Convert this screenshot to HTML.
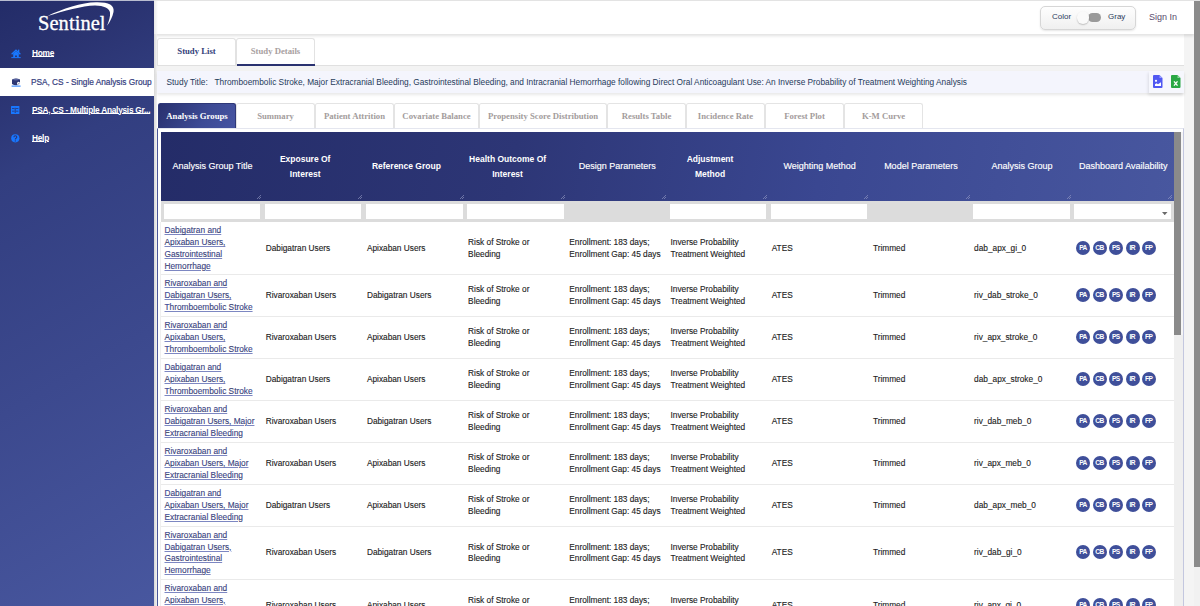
<!DOCTYPE html><html><head><meta charset="utf-8"><style>
*{margin:0;padding:0;box-sizing:border-box}
html,body{width:1200px;height:606px;overflow:hidden;background:#f4f4f4;font-family:"Liberation Sans",sans-serif}
.abs{position:absolute}
#topline{left:0;top:0;width:1200px;height:1px;background:#e4e4e4}
#topline2{left:0;top:0;width:154px;height:1px;background:#b9bdd0}
#side{left:0;top:1px;width:154px;height:605px;background:linear-gradient(150deg,#232c68 0%,#2a3371 12%,#323e80 26%,#3c498e 60%,#48579f 100%)}
#sideshadow{left:154px;top:34px;width:3px;height:572px;background:linear-gradient(90deg,#d8d8d8,#f2f2f2)}
.logo{left:38px;top:12px;-webkit-text-stroke:0.3px #fff;font-family:"Liberation Serif",serif;font-size:20.5px;line-height:22px;color:#fff;letter-spacing:0.05px}
.mi{left:0;width:154px;height:28px;font-size:8.3px;font-weight:bold;color:#fff;text-decoration:underline;text-underline-offset:0px;line-height:28px;padding-left:32px;white-space:nowrap;letter-spacing:-0.25px}
.mi.act{background:#fff;color:#36407e;font-weight:normal;text-decoration:none;letter-spacing:-0.02px;padding-left:31px;-webkit-text-stroke:0.2px #36407e}
.ico{position:absolute;left:11px;top:10px}
#header{left:154px;top:1px;width:1040px;height:33px;background:#fff;box-shadow:0 2px 3px rgba(0,0,0,0.12)}
#main{left:154px;top:34px;width:1030px;height:572px;background:#fff}
#pgsb{left:1194px;top:1px;width:6px;height:605px;background:linear-gradient(#8b8b8b 0,#8b8b8b 566.5px,#f1f1f1 566.5px)}
.toggle{left:1039.5px;top:5.5px;width:96px;height:24px;border:1px solid #d6d6d6;border-radius:5px;background:linear-gradient(#fefefe,#f0f0f0);box-shadow:0 1px 2px rgba(0,0,0,0.1)}
.tg-t{font-size:8px;color:#2c3d5c;top:6px}
.track{left:1087.5px;top:13px;width:13px;height:9px;border-radius:4.5px;background:#9a9a9a}
.knob{left:1076.8px;top:11.4px;width:12.2px;height:12.2px;border-radius:50%;background:#fafafa;box-shadow:0 1px 1.5px rgba(0,0,0,0.22)}
.signin{left:1149px;top:12px;font-size:9px;color:#5a4a6c}
.tab1{top:38px;height:27px;border:1px solid #e2e2e2;border-bottom:none;border-radius:3px 3px 0 0;background:#fff;font-family:"Liberation Serif",serif;font-weight:bold;font-size:8.7px;text-align:center;line-height:25px}
#tabline{left:157px;top:65px;width:1027px;height:1px;background:#e0e0e0}
#graystrip{left:157px;top:66px;width:1027px;height:5px;background:#f3f3f3}
#titlebar{left:157px;top:71px;width:1027px;height:22px;background:#f4f5fd;box-shadow:0 2px 3px rgba(0,0,0,0.09)}
.ttext{left:166.5px;top:77px;font-size:8.33px;color:#1f3a5a;white-space:nowrap}
#iconbox{left:1149px;top:71px;width:35px;height:22px;background:#f6f7fd;box-shadow:-1px 2px 3px rgba(0,0,0,0.1)}
.tab2{top:103px;height:25px;border:1px solid #e4e4e4;border-bottom:none;border-radius:2.5px 2.5px 0 0;background:#fff;font-family:"Liberation Serif",serif;font-weight:bold;font-size:8.7px;color:#a39c9c;text-align:center;line-height:24px;white-space:nowrap}
.tab2.act{background:linear-gradient(120deg,#29316f,#3d4b95 60%,#4755a2);color:#fff;border-color:#2f3878}
#cont{left:157px;top:128px;width:1027px;height:500px;border:1px solid #e4e6ef;border-left:1px solid #4a5698;border-right:1px solid #c3c7df;background:#fff}
#gap{left:1181px;top:132px;width:2px;height:203px;background:#f6f6f6}
#thead{left:161px;top:132px;width:1012.5px;height:69px;background:linear-gradient(100deg,#242c68 0%,#2d3676 35%,#3a4791 65%,#48579f 100%)}
.th{top:132px;height:69px;width:101px;display:flex;align-items:center;justify-content:center;text-align:center;color:#fff;font-weight:bold;font-size:8.3px;line-height:15.4px;padding:1px 0 0 0}
.rh{width:5px;height:5px;top:194px}
#filt{left:161px;top:201px;width:1012.5px;height:21px;background:#dcdcdc}
.inp{top:204px;height:15px;background:#fff}
#tsb{left:1173.5px;top:132px;width:9.5px;height:474px;background:#efefef}
#tsbth{left:1173.5px;top:132px;width:7.5px;height:203px;background:#8a8a8a}
.cell{display:flex;align-items:center;font-size:8.3px;color:#222;-webkit-text-stroke:0.12px #222;line-height:11.75px;padding-left:3.5px;padding-top:1.5px;white-space:nowrap}
.lnk{color:#3f4d9c;text-decoration:underline;text-decoration-color:#7d87c2}
.rl{left:161px;width:1012.5px;height:1px;background:#eaeaea}
.bd{width:14px;height:14px;border-radius:50%;background:#3f4f9a;color:#fff;font-size:6.6px;font-weight:bold;text-align:center;line-height:14px;letter-spacing:-0.55px;text-indent:-0.5px}
</style></head><body>
<div class="abs" id="topline"></div><div class="abs" id="topline2"></div>
<div class="abs" id="main"></div>
<div class="abs" id="side"></div>
<svg class="abs" style="left:40px;top:0px" width="80" height="32" viewBox="0 0 80 32"><path d="M7.5 16 C 22 9, 42 2.5, 56 2.3 C 68 2, 75 5, 73.5 12 C 72.5 17, 70 22, 67 25.8 C 69 21, 70.5 16, 70 12.5 C 69.5 8.5, 64 5.5, 55 5.5 C 42 5.8, 24 11, 7.5 16 Z" fill="#fff"/></svg>
<div class="abs logo">Sentinel</div>
<div class="abs mi" style="top:39px"><svg class="ico" style="top:10px" width="10" height="10" viewBox="0 0 10 10"><path d="M0.6 5.2 L5 1.2 L9.4 5.2" stroke="#1877ff" stroke-width="1.3" fill="none"/><rect x="7" y="0.6" width="1.3" height="2.8" fill="#1877ff"/><path d="M2.2 4.6 L5 2.2 L7.8 4.6 V8.2 H5.9 V6.4 H4.1 V8.2 H2.2 Z" fill="#1877ff"/><rect x="0.3" y="8.1" width="9.4" height="1" fill="#1877ff"/></svg>Home</div>
<div class="abs mi act" style="top:68px"><svg class="ico" style="top:9px" width="10" height="11" viewBox="0 0 10 11"><path d="M1 2.6 Q5 0.2 9 2.6 V7 Q5 9.4 1 7 Z" fill="#2c3775"/><path d="M1.5 2.7 Q5 1 8.5 2.7 Q5 4.3 1.5 2.7 Z" fill="#5a64a0"/><circle cx="7.6" cy="6.4" r="1.6" fill="#fff"/><path d="M6.9 6.5 L7.5 7.1 L8.4 5.8" stroke="#2c3775" stroke-width="0.6" fill="none"/><rect x="0.6" y="8.6" width="9" height="1" fill="#1877ff"/></svg>PSA, CS - Single Analysis Group</div>
<div class="abs mi" style="top:96px"><svg class="ico" style="top:10px" width="9" height="8" viewBox="0 0 9 8"><rect x="0" y="0" width="8.4" height="8" rx="0.5" fill="#1877ff"/><path d="M1 2.5 H3.6 M4.8 2.5 H7.4 M1 5.2 H3.6 M4.8 5.2 H7.4" stroke="#2b3577" stroke-width="0.8"/><path d="M4.2 1.8 V7" stroke="#2b3577" stroke-width="0.9"/></svg>PSA, CS - Multiple Analysis Gr...</div>
<div class="abs mi" style="top:124px"><svg class="ico" style="top:10px" width="9" height="9" viewBox="0 0 9 9"><circle cx="4.3" cy="4.3" r="4.1" fill="#1877ff"/><path d="M2.9 3.3 Q2.9 1.7 4.3 1.7 Q5.8 1.7 5.8 3.1 Q5.8 4 4.8 4.5 Q4.3 4.8 4.3 5.4" stroke="#2b3577" stroke-width="1.1" fill="none"/><circle cx="4.3" cy="6.9" r="0.65" fill="#2b3577"/></svg>Help</div>
<div class="abs" id="header"></div>
<div class="abs toggle"></div>
<div class="abs tg-t" style="left:1052px;top:12px">Color</div>
<div class="abs track"></div><div class="abs knob"></div>
<div class="abs tg-t" style="left:1108px;top:12px">Gray</div>
<div class="abs signin">Sign In</div>
<div class="abs" id="pgsb"></div>
<div class="abs" id="sideshadow"></div><div class="abs" style="left:154px;top:1px;width:4px;height:33px;background:linear-gradient(90deg,rgba(0,0,0,0.09),rgba(0,0,0,0))"></div>
<div class="abs tab1" style="left:157px;width:79px;color:#353f7a">Study List</div>
<div class="abs tab1" style="left:236px;width:79px;color:#a8a0a0">Study Details</div>
<div class="abs" id="tabline"></div>
<div class="abs" style="left:237px;top:64px;width:78px;height:2.5px;background:#2a3270"></div>
<div class="abs" id="graystrip"></div><div class="abs" id="titlebar"></div>
<div class="abs ttext">Study Title:</div><div class="abs ttext" style="left:214.5px;font-size:8.31px">Thromboembolic Stroke, Major Extracranial Bleeding, Gastrointestinal Bleeding, and Intracranial Hemorrhage following Direct Oral Anticoagulant Use: An Inverse Probability of Treatment Weighting Analysis</div>
<div class="abs" id="iconbox"></div>
<svg class="abs" style="left:1153px;top:75px" width="10" height="13" viewBox="0 0 10 13"><path d="M1 0 H6.5 L9.5 3 V12 Q9.5 13 8.5 13 H1 Q0 13 0 12 V1 Q0 0 1 0 Z" fill="#5058f2"/><path d="M6.5 0.3 V3 H9.3 Z" fill="#9aa0ff"/><path d="M2 11 V9.2 L3.5 8.2 L5 9.3 L8 7.3 V11 Z" fill="#fff"/><circle cx="3" cy="5.8" r="1.1" fill="#fff"/></svg><svg class="abs" style="left:1171px;top:75px" width="10" height="13" viewBox="0 0 10 13"><path d="M1 0 H6.5 L9.5 3 V12 Q9.5 13 8.5 13 H1 Q0 13 0 12 V1 Q0 0 1 0 Z" fill="#2aa845"/><path d="M6.5 0.3 V3 H9.3 Z" fill="#8fd6a0"/><path d="M3 6.3 L6.5 10.7 M6.5 6.3 L3 10.7" stroke="#fff" stroke-width="1.3"/></svg>
<div class="abs" id="cont"></div>
<div class="abs tab2 act" style="left:158px;width:78px">Analysis Groups</div>
<div class="abs tab2" style="left:236px;width:79px">Summary</div>
<div class="abs tab2" style="left:315px;width:79px">Patient Attrition</div>
<div class="abs tab2" style="left:394px;width:85px">Covariate Balance</div>
<div class="abs tab2" style="left:479px;width:128px">Propensity Score Distribution</div>
<div class="abs tab2" style="left:607px;width:79px">Results Table</div>
<div class="abs tab2" style="left:686px;width:79px">Incidence Rate</div>
<div class="abs tab2" style="left:765px;width:79px">Forest Plot</div>
<div class="abs tab2" style="left:844px;width:79px">K-M Curve</div>
<div class="abs" id="thead"></div>
<div class="abs th" style="left:162.0px;width:101px;font-weight:normal;font-size:9px;padding:0 0 0 0;white-space:nowrap;justify-content:center;-webkit-text-stroke:0.15px #fff">Analysis Group Title</div>
<svg class="abs rh" style="left:256.2px" viewBox="0 0 5 5"><path d="M1 5 L5 1 M3 5 L5 3" stroke="#9aa0c8" stroke-width="0.6"/></svg>
<div class="abs th" style="left:262.2px;padding-right:15px;font-weight:bold;font-size:8.5px">Exposure Of<br>Interest</div>
<svg class="abs rh" style="left:357.4px" viewBox="0 0 5 5"><path d="M1 5 L5 1 M3 5 L5 3" stroke="#9aa0c8" stroke-width="0.6"/></svg>
<div class="abs th" style="left:363.4px;padding-right:15px;font-weight:bold;font-size:8.5px">Reference Group</div>
<svg class="abs rh" style="left:458.6px" viewBox="0 0 5 5"><path d="M1 5 L5 1 M3 5 L5 3" stroke="#9aa0c8" stroke-width="0.6"/></svg>
<div class="abs th" style="left:464.6px;padding-right:15px;font-weight:bold;font-size:8.5px">Health Outcome Of<br>Interest</div>
<svg class="abs rh" style="left:559.8px" viewBox="0 0 5 5"><path d="M1 5 L5 1 M3 5 L5 3" stroke="#9aa0c8" stroke-width="0.6"/></svg>
<div class="abs th" style="left:566.8px;width:101px;font-weight:normal;font-size:9px;padding:0 0 0 0;white-space:nowrap;justify-content:center;-webkit-text-stroke:0.15px #fff">Design Parameters</div>
<svg class="abs rh" style="left:661.0px" viewBox="0 0 5 5"><path d="M1 5 L5 1 M3 5 L5 3" stroke="#9aa0c8" stroke-width="0.6"/></svg>
<div class="abs th" style="left:667.0px;padding-right:15px;font-weight:bold;font-size:8.5px">Adjustment<br>Method</div>
<svg class="abs rh" style="left:762.2px" viewBox="0 0 5 5"><path d="M1 5 L5 1 M3 5 L5 3" stroke="#9aa0c8" stroke-width="0.6"/></svg>
<div class="abs th" style="left:769.2px;width:101px;font-weight:normal;font-size:9px;padding:0 0 0 0;white-space:nowrap;justify-content:center;-webkit-text-stroke:0.15px #fff">Weighting Method</div>
<svg class="abs rh" style="left:863.4px" viewBox="0 0 5 5"><path d="M1 5 L5 1 M3 5 L5 3" stroke="#9aa0c8" stroke-width="0.6"/></svg>
<div class="abs th" style="left:870.4px;width:101px;font-weight:normal;font-size:9px;padding:0 0 0 0;white-space:nowrap;justify-content:center;-webkit-text-stroke:0.15px #fff">Model Parameters</div>
<svg class="abs rh" style="left:964.6px" viewBox="0 0 5 5"><path d="M1 5 L5 1 M3 5 L5 3" stroke="#9aa0c8" stroke-width="0.6"/></svg>
<div class="abs th" style="left:971.6px;width:101px;font-weight:normal;font-size:9px;padding:0 0 0 0;white-space:nowrap;justify-content:center;-webkit-text-stroke:0.15px #fff">Analysis Group</div>
<svg class="abs rh" style="left:1065.8px" viewBox="0 0 5 5"><path d="M1 5 L5 1 M3 5 L5 3" stroke="#9aa0c8" stroke-width="0.6"/></svg>
<div class="abs th" style="left:1072.8px;width:101px;font-weight:normal;font-size:9px;padding:0 0 0 0;white-space:nowrap;justify-content:center;-webkit-text-stroke:0.15px #fff">Dashboard Availability</div>
<svg class="abs rh" style="left:1167.0px" viewBox="0 0 5 5"><path d="M1 5 L5 1 M3 5 L5 3" stroke="#9aa0c8" stroke-width="0.6"/></svg>
<div class="abs" id="filt"></div>
<div class="abs inp" style="left:163.5px;width:96.8px"></div>
<div class="abs inp" style="left:264.7px;width:96.8px"></div>
<div class="abs inp" style="left:365.9px;width:96.8px"></div>
<div class="abs inp" style="left:467.1px;width:96.8px"></div>
<div class="abs inp" style="left:669.5px;width:96.8px"></div>
<div class="abs inp" style="left:770.7px;width:96.8px"></div>
<div class="abs inp" style="left:973.1px;width:96.8px"></div>
<div class="abs inp" style="left:1074.3px;width:96.8px"></div>
<svg class="abs" style="left:1162px;top:212px" width="5.5" height="3.2" viewBox="0 0 5.5 3.2"><path d="M0 0 H5.5 L2.75 3.2 Z" fill="#6a6a6a"/></svg>
<div class="abs cell" style="left:161.0px;top:222px;width:101px;height:52px;"><div class="lnk">Dabigatran and<br>Apixaban Users,<br>Gastrointestinal<br>Hemorrhage</div></div>
<div class="abs cell" style="left:262.2px;top:222px;width:101px;height:52px;">Dabigatran Users</div>
<div class="abs cell" style="left:363.4px;top:222px;width:101px;height:52px;">Apixaban Users</div>
<div class="abs cell" style="left:464.6px;top:222px;width:101px;height:52px;">Risk of Stroke or<br>Bleeding</div>
<div class="abs cell" style="left:565.8px;top:222px;width:101px;height:52px;">Enrollment: 183 days;<br>Enrollment Gap: 45 days</div>
<div class="abs cell" style="left:667.0px;top:222px;width:101px;height:52px;">Inverse Probability<br>Treatment Weighted</div>
<div class="abs cell" style="left:768.2px;top:222px;width:101px;height:52px;">ATES</div>
<div class="abs cell" style="left:869.4px;top:222px;width:101px;height:52px;">Trimmed</div>
<div class="abs cell" style="left:970.6px;top:222px;width:101px;height:52px;">dab_apx_gi_0</div>
<div class="abs bd" style="left:1076.2px;top:240.9px">PA</div>
<div class="abs bd" style="left:1092.7px;top:240.9px">CB</div>
<div class="abs bd" style="left:1109.1px;top:240.9px">PS</div>
<div class="abs bd" style="left:1125.5px;top:240.9px">IR</div>
<div class="abs bd" style="left:1142.0px;top:240.9px">FP</div>
<div class="abs rl" style="top:274px"></div>
<div class="abs cell" style="left:161.0px;top:274px;width:101px;height:42px;"><div class="lnk">Rivaroxaban and<br>Dabigatran Users,<br>Thromboembolic Stroke</div></div>
<div class="abs cell" style="left:262.2px;top:274px;width:101px;height:42px;">Rivaroxaban Users</div>
<div class="abs cell" style="left:363.4px;top:274px;width:101px;height:42px;">Dabigatran Users</div>
<div class="abs cell" style="left:464.6px;top:274px;width:101px;height:42px;">Risk of Stroke or<br>Bleeding</div>
<div class="abs cell" style="left:565.8px;top:274px;width:101px;height:42px;">Enrollment: 183 days;<br>Enrollment Gap: 45 days</div>
<div class="abs cell" style="left:667.0px;top:274px;width:101px;height:42px;">Inverse Probability<br>Treatment Weighted</div>
<div class="abs cell" style="left:768.2px;top:274px;width:101px;height:42px;">ATES</div>
<div class="abs cell" style="left:869.4px;top:274px;width:101px;height:42px;">Trimmed</div>
<div class="abs cell" style="left:970.6px;top:274px;width:101px;height:42px;">riv_dab_stroke_0</div>
<div class="abs bd" style="left:1076.2px;top:287.9px">PA</div>
<div class="abs bd" style="left:1092.7px;top:287.9px">CB</div>
<div class="abs bd" style="left:1109.1px;top:287.9px">PS</div>
<div class="abs bd" style="left:1125.5px;top:287.9px">IR</div>
<div class="abs bd" style="left:1142.0px;top:287.9px">FP</div>
<div class="abs rl" style="top:316px"></div>
<div class="abs cell" style="left:161.0px;top:316px;width:101px;height:42px;"><div class="lnk">Rivaroxaban and<br>Apixaban Users,<br>Thromboembolic Stroke</div></div>
<div class="abs cell" style="left:262.2px;top:316px;width:101px;height:42px;">Rivaroxaban Users</div>
<div class="abs cell" style="left:363.4px;top:316px;width:101px;height:42px;">Apixaban Users</div>
<div class="abs cell" style="left:464.6px;top:316px;width:101px;height:42px;">Risk of Stroke or<br>Bleeding</div>
<div class="abs cell" style="left:565.8px;top:316px;width:101px;height:42px;">Enrollment: 183 days;<br>Enrollment Gap: 45 days</div>
<div class="abs cell" style="left:667.0px;top:316px;width:101px;height:42px;">Inverse Probability<br>Treatment Weighted</div>
<div class="abs cell" style="left:768.2px;top:316px;width:101px;height:42px;">ATES</div>
<div class="abs cell" style="left:869.4px;top:316px;width:101px;height:42px;">Trimmed</div>
<div class="abs cell" style="left:970.6px;top:316px;width:101px;height:42px;">riv_apx_stroke_0</div>
<div class="abs bd" style="left:1076.2px;top:329.9px">PA</div>
<div class="abs bd" style="left:1092.7px;top:329.9px">CB</div>
<div class="abs bd" style="left:1109.1px;top:329.9px">PS</div>
<div class="abs bd" style="left:1125.5px;top:329.9px">IR</div>
<div class="abs bd" style="left:1142.0px;top:329.9px">FP</div>
<div class="abs rl" style="top:358px"></div>
<div class="abs cell" style="left:161.0px;top:358px;width:101px;height:42px;"><div class="lnk">Dabigatran and<br>Apixaban Users,<br>Thromboembolic Stroke</div></div>
<div class="abs cell" style="left:262.2px;top:358px;width:101px;height:42px;">Dabigatran Users</div>
<div class="abs cell" style="left:363.4px;top:358px;width:101px;height:42px;">Apixaban Users</div>
<div class="abs cell" style="left:464.6px;top:358px;width:101px;height:42px;">Risk of Stroke or<br>Bleeding</div>
<div class="abs cell" style="left:565.8px;top:358px;width:101px;height:42px;">Enrollment: 183 days;<br>Enrollment Gap: 45 days</div>
<div class="abs cell" style="left:667.0px;top:358px;width:101px;height:42px;">Inverse Probability<br>Treatment Weighted</div>
<div class="abs cell" style="left:768.2px;top:358px;width:101px;height:42px;">ATES</div>
<div class="abs cell" style="left:869.4px;top:358px;width:101px;height:42px;">Trimmed</div>
<div class="abs cell" style="left:970.6px;top:358px;width:101px;height:42px;">dab_apx_stroke_0</div>
<div class="abs bd" style="left:1076.2px;top:371.9px">PA</div>
<div class="abs bd" style="left:1092.7px;top:371.9px">CB</div>
<div class="abs bd" style="left:1109.1px;top:371.9px">PS</div>
<div class="abs bd" style="left:1125.5px;top:371.9px">IR</div>
<div class="abs bd" style="left:1142.0px;top:371.9px">FP</div>
<div class="abs rl" style="top:400px"></div>
<div class="abs cell" style="left:161.0px;top:400px;width:101px;height:42px;"><div class="lnk">Rivaroxaban and<br>Dabigatran Users, Major<br>Extracranial Bleeding</div></div>
<div class="abs cell" style="left:262.2px;top:400px;width:101px;height:42px;">Rivaroxaban Users</div>
<div class="abs cell" style="left:363.4px;top:400px;width:101px;height:42px;">Dabigatran Users</div>
<div class="abs cell" style="left:464.6px;top:400px;width:101px;height:42px;">Risk of Stroke or<br>Bleeding</div>
<div class="abs cell" style="left:565.8px;top:400px;width:101px;height:42px;">Enrollment: 183 days;<br>Enrollment Gap: 45 days</div>
<div class="abs cell" style="left:667.0px;top:400px;width:101px;height:42px;">Inverse Probability<br>Treatment Weighted</div>
<div class="abs cell" style="left:768.2px;top:400px;width:101px;height:42px;">ATES</div>
<div class="abs cell" style="left:869.4px;top:400px;width:101px;height:42px;">Trimmed</div>
<div class="abs cell" style="left:970.6px;top:400px;width:101px;height:42px;">riv_dab_meb_0</div>
<div class="abs bd" style="left:1076.2px;top:413.9px">PA</div>
<div class="abs bd" style="left:1092.7px;top:413.9px">CB</div>
<div class="abs bd" style="left:1109.1px;top:413.9px">PS</div>
<div class="abs bd" style="left:1125.5px;top:413.9px">IR</div>
<div class="abs bd" style="left:1142.0px;top:413.9px">FP</div>
<div class="abs rl" style="top:442px"></div>
<div class="abs cell" style="left:161.0px;top:442px;width:101px;height:42px;"><div class="lnk">Rivaroxaban and<br>Apixaban Users, Major<br>Extracranial Bleeding</div></div>
<div class="abs cell" style="left:262.2px;top:442px;width:101px;height:42px;">Rivaroxaban Users</div>
<div class="abs cell" style="left:363.4px;top:442px;width:101px;height:42px;">Apixaban Users</div>
<div class="abs cell" style="left:464.6px;top:442px;width:101px;height:42px;">Risk of Stroke or<br>Bleeding</div>
<div class="abs cell" style="left:565.8px;top:442px;width:101px;height:42px;">Enrollment: 183 days;<br>Enrollment Gap: 45 days</div>
<div class="abs cell" style="left:667.0px;top:442px;width:101px;height:42px;">Inverse Probability<br>Treatment Weighted</div>
<div class="abs cell" style="left:768.2px;top:442px;width:101px;height:42px;">ATES</div>
<div class="abs cell" style="left:869.4px;top:442px;width:101px;height:42px;">Trimmed</div>
<div class="abs cell" style="left:970.6px;top:442px;width:101px;height:42px;">riv_apx_meb_0</div>
<div class="abs bd" style="left:1076.2px;top:455.9px">PA</div>
<div class="abs bd" style="left:1092.7px;top:455.9px">CB</div>
<div class="abs bd" style="left:1109.1px;top:455.9px">PS</div>
<div class="abs bd" style="left:1125.5px;top:455.9px">IR</div>
<div class="abs bd" style="left:1142.0px;top:455.9px">FP</div>
<div class="abs rl" style="top:484px"></div>
<div class="abs cell" style="left:161.0px;top:484px;width:101px;height:42px;"><div class="lnk">Dabigatran and<br>Apixaban Users, Major<br>Extracranial Bleeding</div></div>
<div class="abs cell" style="left:262.2px;top:484px;width:101px;height:42px;">Dabigatran Users</div>
<div class="abs cell" style="left:363.4px;top:484px;width:101px;height:42px;">Apixaban Users</div>
<div class="abs cell" style="left:464.6px;top:484px;width:101px;height:42px;">Risk of Stroke or<br>Bleeding</div>
<div class="abs cell" style="left:565.8px;top:484px;width:101px;height:42px;">Enrollment: 183 days;<br>Enrollment Gap: 45 days</div>
<div class="abs cell" style="left:667.0px;top:484px;width:101px;height:42px;">Inverse Probability<br>Treatment Weighted</div>
<div class="abs cell" style="left:768.2px;top:484px;width:101px;height:42px;">ATES</div>
<div class="abs cell" style="left:869.4px;top:484px;width:101px;height:42px;">Trimmed</div>
<div class="abs cell" style="left:970.6px;top:484px;width:101px;height:42px;">dab_apx_meb_0</div>
<div class="abs bd" style="left:1076.2px;top:497.9px">PA</div>
<div class="abs bd" style="left:1092.7px;top:497.9px">CB</div>
<div class="abs bd" style="left:1109.1px;top:497.9px">PS</div>
<div class="abs bd" style="left:1125.5px;top:497.9px">IR</div>
<div class="abs bd" style="left:1142.0px;top:497.9px">FP</div>
<div class="abs rl" style="top:526px"></div>
<div class="abs cell" style="left:161.0px;top:526px;width:101px;height:53px;"><div class="lnk">Rivaroxaban and<br>Dabigatran Users,<br>Gastrointestinal<br>Hemorrhage</div></div>
<div class="abs cell" style="left:262.2px;top:526px;width:101px;height:53px;">Rivaroxaban Users</div>
<div class="abs cell" style="left:363.4px;top:526px;width:101px;height:53px;">Dabigatran Users</div>
<div class="abs cell" style="left:464.6px;top:526px;width:101px;height:53px;">Risk of Stroke or<br>Bleeding</div>
<div class="abs cell" style="left:565.8px;top:526px;width:101px;height:53px;">Enrollment: 183 days;<br>Enrollment Gap: 45 days</div>
<div class="abs cell" style="left:667.0px;top:526px;width:101px;height:53px;">Inverse Probability<br>Treatment Weighted</div>
<div class="abs cell" style="left:768.2px;top:526px;width:101px;height:53px;">ATES</div>
<div class="abs cell" style="left:869.4px;top:526px;width:101px;height:53px;">Trimmed</div>
<div class="abs cell" style="left:970.6px;top:526px;width:101px;height:53px;">riv_dab_gi_0</div>
<div class="abs bd" style="left:1076.2px;top:545.4px">PA</div>
<div class="abs bd" style="left:1092.7px;top:545.4px">CB</div>
<div class="abs bd" style="left:1109.1px;top:545.4px">PS</div>
<div class="abs bd" style="left:1125.5px;top:545.4px">IR</div>
<div class="abs bd" style="left:1142.0px;top:545.4px">FP</div>
<div class="abs rl" style="top:579px"></div>
<div class="abs cell" style="left:161.0px;top:579px;width:101px;height:53px;"><div class="lnk">Rivaroxaban and<br>Apixaban Users,<br>Gastrointestinal<br>Hemorrhage</div></div>
<div class="abs cell" style="left:262.2px;top:579px;width:101px;height:53px;">Rivaroxaban Users</div>
<div class="abs cell" style="left:363.4px;top:579px;width:101px;height:53px;">Apixaban Users</div>
<div class="abs cell" style="left:464.6px;top:579px;width:101px;height:53px;">Risk of Stroke or<br>Bleeding</div>
<div class="abs cell" style="left:565.8px;top:579px;width:101px;height:53px;">Enrollment: 183 days;<br>Enrollment Gap: 45 days</div>
<div class="abs cell" style="left:667.0px;top:579px;width:101px;height:53px;">Inverse Probability<br>Treatment Weighted</div>
<div class="abs cell" style="left:768.2px;top:579px;width:101px;height:53px;">ATES</div>
<div class="abs cell" style="left:869.4px;top:579px;width:101px;height:53px;">Trimmed</div>
<div class="abs cell" style="left:970.6px;top:579px;width:101px;height:53px;">riv_apx_gi_0</div>
<div class="abs bd" style="left:1076.2px;top:598.4px">PA</div>
<div class="abs bd" style="left:1092.7px;top:598.4px">CB</div>
<div class="abs bd" style="left:1109.1px;top:598.4px">PS</div>
<div class="abs bd" style="left:1125.5px;top:598.4px">IR</div>
<div class="abs bd" style="left:1142.0px;top:598.4px">FP</div>
<div class="abs rl" style="top:632px"></div>
<div class="abs" style="left:160px;top:222px;width:1px;height:384px;background:#efefef"></div>
<div class="abs" id="tsb"></div><div class="abs" id="tsbth"></div><div class="abs" id="gap"></div>
</body></html>
